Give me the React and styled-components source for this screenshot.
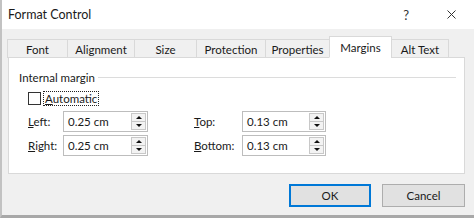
import React from 'react';
import styled, { createGlobalStyle } from 'styled-components';

const GlobalStyle = createGlobalStyle`
  html, body {
    margin: 0;
    padding: 0;
    background: #f0f0f0;
  }
  body {
    font-family: Lato, 'Noto Sans', sans-serif;
    font-size: 11.5px;
    color: #1a1a1a;
  }
`;

const Window = styled.div`
  width: 474px;
  height: 218px;
  box-sizing: border-box;
  display: flex;
  flex-direction: column;
  background: #f0f0f0;
  border-left: 2px solid #c2c2c2;
  border-bottom: 3px solid #a8a8a8;
  overflow: hidden;
`;

const TitleBar = styled.div`
  height: 29px;
  flex-shrink: 0;
  background: #fff;
  display: flex;
  align-items: center;
  padding: 0 18px 0 6px;
  gap: 38px;
  font-size: 12.5px;
`;

const Title = styled.div`
  flex: 1;
`;

const TitleButton = styled.div`
  flex-shrink: 0;
  height: 29px;
  display: flex;
  align-items: center;
  color: #333;
  font-size: 13px;
`;

const Body = styled.div`
  flex: 1;
  padding: 7px 9px 0 6px;
  display: flex;
  flex-direction: column;
`;

const TabStrip = styled.div`
  display: flex;
  align-items: flex-end;
  height: 22px;
  position: relative;
  z-index: 1;
  margin-bottom: -1px;
`;

const Tab = styled.div`
  width: ${(p) => p.$w}px;
  box-sizing: border-box;
  height: ${(p) => (p.$active ? 22 : 19)}px;
  display: flex;
  align-items: center;
  justify-content: center;
  background: ${(p) => (p.$active ? '#fff' : '#f0f0f0')};
  border: 1px solid #d9d9d9;
  border-bottom: ${(p) => (p.$active ? '1px solid #fff' : '1px solid #d9d9d9')};
  margin-left: -1px;
  padding-top: ${(p) => (p.$active ? 0 : 1)}px;
`;

const Panel = styled.div`
  height: 117px;
  box-sizing: border-box;
  background: #fff;
  border: 1px solid #d9d9d9;
  padding: 11px 8px 0 10px;
`;

const GroupHeader = styled.div`
  display: flex;
  align-items: center;
  height: 16px;
  gap: 3px;
`;

const GroupLine = styled.div`
  flex: 1;
  height: 1px;
  background: #dcdcdc;
`;

const CheckRow = styled.label`
  display: flex;
  align-items: center;
  margin: 6px 0 0 9px;
  height: 14px;
  gap: 3px;
`;

const CheckBox = styled.span`
  width: 11px;
  height: 11px;
  border: 1px solid #333;
  background: #fff;
  display: inline-block;
`;

const FocusText = styled.span`
  outline: 1px dotted #222;
  padding: 0 1px;
  line-height: 13px;
`;

const Grid = styled.div`
  display: grid;
  grid-template-columns: 35px 85px 46px 48px 84px;
  row-gap: 3px;
  margin: 6px 0 0 9px;
  align-items: center;
`;

const FieldLabel = styled.div``;

const Spin = styled.div`
  height: 21px;
  box-sizing: border-box;
  border: 1px solid #bdbdbd;
  display: flex;
  align-items: center;
  padding: 0 1px 0 4px;
`;

const SpinValue = styled.div`
  flex: 1;
`;

const Arrows = styled.div`
  width: 15px;
  height: 17px;
  display: flex;
  flex-direction: column;
  border: 1px solid #c8c8c8;
  box-sizing: border-box;
  background: #f3f3f3;
`;

const ArrowHalf = styled.div`
  flex: 1;
  display: flex;
  align-items: center;
  justify-content: center;
  border-top: ${(p) => (p.$down ? '1px solid #c8c8c8' : 'none')};
  &::after {
    content: '';
    border-left: 3px solid transparent;
    border-right: 3px solid transparent;
    ${(p) =>
      p.$down ? 'border-top: 3px solid #111;' : 'border-bottom: 3px solid #111;'}
  }
`;

const Footer = styled.div`
  display: flex;
  justify-content: flex-end;
  gap: 11px;
  padding: 10px 0 0 0;
`;

const Button = styled.button`
  width: ${(p) => (p.$primary ? 82 : 83)}px;
  height: 23px;
  box-sizing: border-box;
  background: #e1e1e1;
  border: ${(p) => (p.$primary ? '2px solid #0078d7' : '1px solid #adadad')};
  font-family: inherit;
  font-size: 11.5px;
  color: #1a1a1a;
  padding: 0;
`;

const U = styled.span`
  text-decoration: underline;
`;

function SpinBox({ value }) {
  return (
    <Spin>
      <SpinValue>{value}</SpinValue>
      <Arrows>
        <ArrowHalf />
        <ArrowHalf $down />
      </Arrows>
    </Spin>
  );
}

const CloseIcon = () => (
  <svg width="9" height="9" viewBox="0 0 9 9" style={{ display: 'block' }}>
    <path d="M0.5 0.5 L8.5 8.5 M8.5 0.5 L0.5 8.5" stroke="#333" strokeWidth="1" fill="none" />
  </svg>
);

const tabs = [
  ['Font', 61],
  ['Alignment', 68],
  ['Size', 63],
  ['Protection', 70],
  ['Properties', 65],
  ['Margins', 63],
  ['Alt Text', 58],
];

export default function App() {
  return (
    <>
      <GlobalStyle />
      <Window>
        <TitleBar>
          <Title>Format Control</Title>
          <TitleButton>?</TitleButton>
          <TitleButton>
            <CloseIcon />
          </TitleButton>
        </TitleBar>
        <Body>
          <TabStrip>
            {tabs.map(([name, w]) => (
              <Tab key={name} $w={w} $active={name === 'Margins'}>
                {name}
              </Tab>
            ))}
          </TabStrip>
          <Panel>
            <GroupHeader>
              <span>Internal margin</span>
              <GroupLine />
            </GroupHeader>
            <CheckRow>
              <CheckBox />
              <FocusText>
                <U>A</U>utomatic
              </FocusText>
            </CheckRow>
            <Grid>
              <FieldLabel>
                <U>L</U>eft:
              </FieldLabel>
              <SpinBox value="0.25 cm" />
              <div />
              <FieldLabel>
                <U>T</U>op:
              </FieldLabel>
              <SpinBox value="0.13 cm" />
              <FieldLabel>
                <U>R</U>ight:
              </FieldLabel>
              <SpinBox value="0.25 cm" />
              <div />
              <FieldLabel>
                <U>B</U>ottom:
              </FieldLabel>
              <SpinBox value="0.13 cm" />
            </Grid>
          </Panel>
          <Footer>
            <Button $primary>OK</Button>
            <Button>Cancel</Button>
          </Footer>
        </Body>
      </Window>
    </>
  );
}
